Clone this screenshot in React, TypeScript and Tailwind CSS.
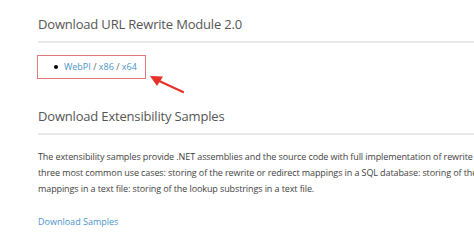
export default function App() {
  return (
    <div className="relative w-[474px] h-[245px] overflow-hidden bg-white font-['Open_Sans',sans-serif]">
      <div className="pl-[38px] pt-[15px]">
        <h2 className="text-[13px] leading-[18px] tracking-[-0.18px] text-[#555] whitespace-nowrap">Download URL Rewrite Module 2.0</h2>
        <div className="mt-[8px] h-[2px] bg-[#e9e9e9]" />
        <div className="mt-[12px] ml-[-1px] w-[109px] h-[24px] border border-[#e07a7a] flex items-center pl-[16px]">
          <span className="shrink-0 w-[4px] h-[4px] rounded-full bg-black" />
          <span className="ml-[6px] text-[9px] leading-[14px] text-[#666] whitespace-nowrap">
            <span className="text-[#4a95c9]">WebPI</span> / <span className="text-[#4a95c9]">x86</span> / <span className="text-[#4a95c9]">x64</span>
          </span>
        </div>
        <h2 className="mt-[28px] text-[13px] leading-[18px] tracking-[-0.18px] text-[#555] whitespace-nowrap">Download Extensibility Samples</h2>
        <div className="mt-[8px] h-[2px] bg-[#e9e9e9]" />
        <div className="mt-[14px] text-[9px] leading-[16px] tracking-[-0.1px] text-[#3f3f3f] whitespace-nowrap">
          <p>The extensibility samples provide .NET assemblies and the source code with full implementation of rewrite</p>
          <p>three most common use cases: storing of the rewrite or redirect mappings in a SQL database: storing of the</p>
          <p>mappings in a text file: storing of the lookup substrings in a text file.</p>
        </div>
        <div className="mt-[17px] text-[9px] leading-[16px] text-[#4a95c9] whitespace-nowrap">Download Samples</div>
      </div>
      <svg className="absolute left-[146px] top-[72px]" width="42" height="24" viewBox="0 0 42 24">
        <line x1="37" y1="20" x2="11" y2="8" stroke="#e8312a" strokeWidth="2.2" strokeLinecap="round" />
        <polygon points="4,4 17,4.5 11,14" fill="#e8312a" />
      </svg>
    </div>
  );
}
